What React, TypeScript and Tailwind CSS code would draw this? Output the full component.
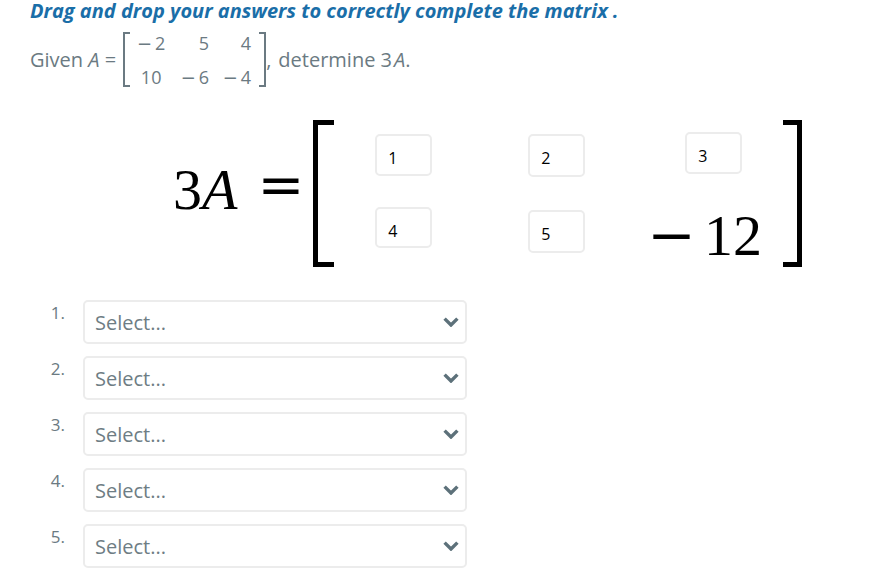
import React from "react";

const sans = { fontFamily: '"Open Sans", "Noto Sans", sans-serif' };
const serif = { fontFamily: '"Liberation Serif", "Times New Roman", serif' };
const djSerif = { fontFamily: '"DejaVu Serif", serif' };
const djSans = { fontFamily: '"DejaVu Sans", sans-serif' };

function DropBox({ label, h, extra }: { label: string; h: string; extra: string }) {
  return (
    <div
      className={`w-[57px] ${h} ${extra} border-2 border-[#ececec] rounded-[5px] bg-white pl-[11px] pt-[12px] text-[16px] leading-[20px] text-black`}
      style={sans}
    >
      {label}
    </div>
  );
}

function Chevron() {
  return (
    <svg width="16" height="10" viewBox="0 0 16 10" className="block">
      <path d="M1.6 1.6 L8 8 L14.4 1.6" fill="none" stroke="#5d717a" strokeWidth="3.4" strokeLinejoin="miter" />
    </svg>
  );
}

function SelectRow({ n }: { n: number }) {
  return (
    <div className="flex items-start">
      <div className="w-[53px] pr-[18px] text-right text-[17px] leading-[20px] mt-[3px] text-[#6b7a82]" style={sans}>
        {n}.
      </div>
      <div className="w-[384px] h-[44px] border-2 border-[#ececec] rounded-[5px] bg-white flex items-center justify-between pl-[10px] pr-[6px]">
        <span className="text-[20px] leading-[24px] pt-[1px] text-[#6e7d84]" style={sans}>
          Select...
        </span>
        <Chevron />
      </div>
    </div>
  );
}

function SmallMinus() {
  return (
    <span className="mr-[3px] text-[18px]" style={djSans}>
      −
    </span>
  );
}

export default function App() {
  return (
    <div className="w-[874px] h-[586px] bg-white overflow-hidden pl-[30px] flex flex-col">
      {/* Title */}
      <div
        className="text-[20px] leading-[21px] font-bold italic text-[#1a6ea8] whitespace-nowrap pr-[4px]"
        style={sans}
      >
        Drag and drop your answers to correctly complete the matrix<span className="ml-[5px]">.</span>
      </div>

      {/* Given line */}
      <div className="mt-[11px] flex items-center h-[55px] text-[20px] leading-[24px] text-[#6b7a82] whitespace-nowrap" style={sans}>
        <span>
          Given <i>A</i> =
        </span>
        <div className="ml-[7px] w-[7px] h-[55px] border-l-2 border-y-2 border-[#6b7a82]" />
        <div className="flex flex-col gap-[13px] pt-[1px] text-[18px] leading-[21px] self-start">
          <div className="grid grid-cols-[42px_37px_42px]">
            <span className="text-center"><SmallMinus />2</span>
            <span className="text-right">5</span>
            <span className="text-right">4</span>
          </div>
          <div className="grid grid-cols-[42px_37px_42px]">
            <span className="text-center">10</span>
            <span className="text-right"><SmallMinus />6</span>
            <span className="text-right"><SmallMinus />4</span>
          </div>
        </div>
        <div className="ml-[8px] w-[7px] h-[55px] border-r-2 border-y-2 border-[#6b7a82]" />
        <span>,</span>
        <span className="ml-[7px]">
          determine 3<i className="ml-[2px]">A</i>.
        </span>
      </div>

      {/* Big matrix */}
      <div className="mt-[33px] flex items-start h-[147px]">
        <div className="ml-[143px] mt-[41px] text-[58px] leading-[58px] text-black whitespace-nowrap" style={serif}>
          3<i>A</i>
        </div>
        <div className="ml-[20px] mt-[37px] text-[56px] leading-[56px] text-black" style={djSerif}>
          =
        </div>
        <div className="ml-[9px] w-[21px] h-[147px] border-l-[5px] border-y-[5px] border-black" />
        {/* col 1 */}
        <div className="ml-[41px] flex flex-col">
          <DropBox label="1" h="h-[42px]" extra="mt-[14px]" />
          <DropBox label="4" h="h-[41px]" extra="mt-[31px]" />
        </div>
        {/* col 2 */}
        <div className="ml-[96px] flex flex-col">
          <DropBox label="2" h="h-[43px]" extra="mt-[14px]" />
          <DropBox label="5" h="h-[43px]" extra="mt-[33px]" />
        </div>
        {/* col 3 */}
        <div className="ml-[62px] flex flex-col w-[115px]">
          <DropBox label="3" h="h-[42px]" extra="mt-[12px] ml-[38px]" />
          <div className="flex items-baseline mt-[32px] h-[58px] text-black whitespace-nowrap">
            <span className="text-[58px] leading-[58px]" style={djSerif}>−</span>
            <span className="ml-[8px] text-[58px] leading-[58px]" style={serif}>12</span>
          </div>
        </div>
        <div className="ml-[21px] w-[19px] h-[147px] border-r-[5px] border-y-[5px] border-black" />
      </div>

      {/* Select list */}
      <div className="mt-[33px] flex flex-col gap-[12px]">
        {[1, 2, 3, 4, 5].map((n) => (
          <SelectRow key={n} n={n} />
        ))}
      </div>
    </div>
  );
}
